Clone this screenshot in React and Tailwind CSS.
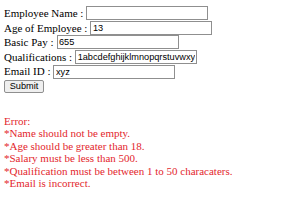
import React from 'react';

const rows = [
  { label: 'Employee Name :', value: '' },
  { label: 'Age of Employee :', value: '13' },
  { label: 'Basic Pay :', value: '655' },
  { label: 'Qualifications :', value: '1abcdefghijklmnopqrstuvwxyz' },
  { label: 'Email ID :', value: 'xyz' },
];

const errors = [
  '*Name should not be empty.',
  '*Age should be greater than 18.',
  '*Salary must be less than 500.',
  '*Qualification must be between 1 to 50 characaters.',
  '*Email is incorrect.',
];

export default function App(){
  return (
    <div className="w-[300px] h-[208px] bg-white pl-[4px] pt-[6px] text-black text-[11px] leading-[12.4px] font-['Liberation_Serif','Times_New_Roman',serif]">
      {rows.map(r=> (
        <div key={r.label} className="flex items-center h-[14.6px]">
          <span>{r.label}</span>
          <input
            readOnly
            value={r.value}
            className="ml-[3px] w-[122px] h-[14px] border border-[#8f8f8f] px-[1.5px] text-[9.2px] text-black outline-none bg-white font-['Liberation_Sans',Arial,sans-serif]"
          />
        </div>
      ))}
      <div>
        <button className="w-[40px] h-[13px] bg-[#efefef] border border-[#8f8f8f] rounded-[2px] text-[9.2px] leading-none text-black font-['Liberation_Sans',Arial,sans-serif]">
          Submit
        </button>
      </div>
      <div className="mt-[22px] text-[#e3262d]">
        <div>Error:</div>
        {errors.map(e=> <div key={e}>{e}</div>)}
      </div>
    </div>
  );
}
